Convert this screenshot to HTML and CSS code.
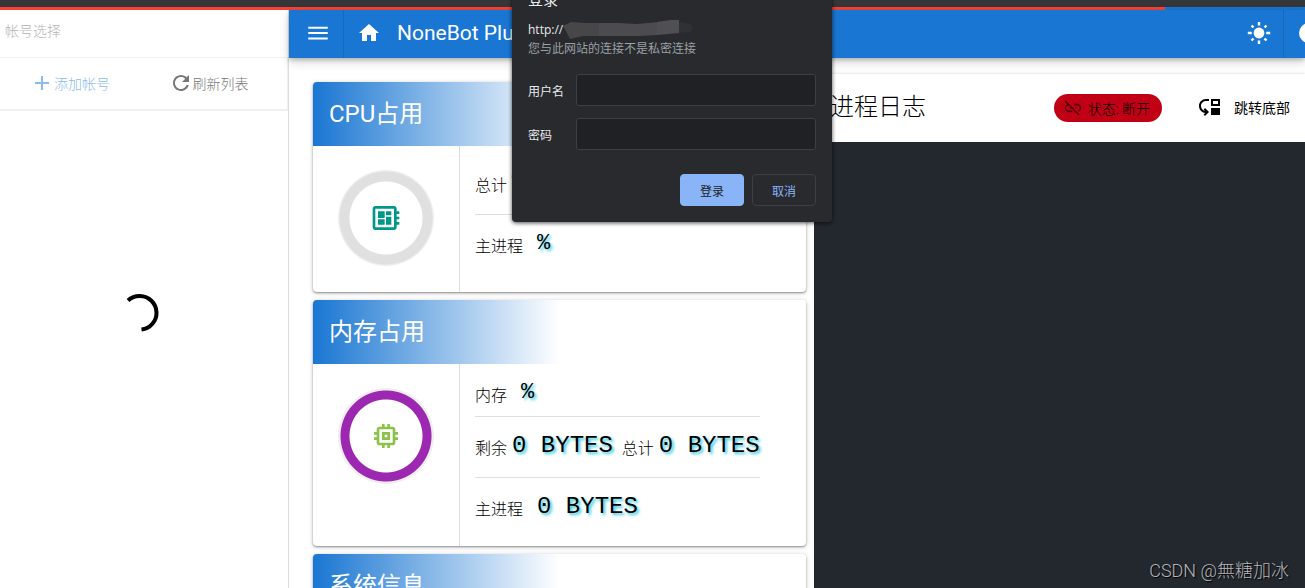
FILE: index.html
```html
<!DOCTYPE html>
<html lang="zh-CN">
<head>
<meta charset="utf-8">
<title>NoneBot</title>
<link rel="stylesheet" href="styles.css">
</head>
<body>
<div class="browser-edge"></div>
<div class="progress"></div>
<div class="app">
  <aside class="sidebar">
    <input class="account-input" type="text" placeholder="帐号选择" aria-label="帐号选择">
    <div class="account-actions">
      <button class="action action-add" type="button">
        <svg width="16" height="16" viewBox="0 0 16 16"><path d="M8 1v14M1 8h14" stroke="currentColor" stroke-width="2"/></svg>添加帐号
      </button>
      <button class="action" type="button">
        <svg width="24" height="24" viewBox="0 0 24 24" fill="currentColor"><path d="M17.65 6.35C16.2 4.9 14.21 4 12 4c-4.42 0-7.99 3.58-7.99 8s3.57 8 7.99 8c3.73 0 6.84-2.55 7.73-6h-2.08c-.82 2.33-3.04 4-5.65 4-3.31 0-6-2.69-6-6s2.69-6 6-6c1.66 0 3.14.69 4.22 1.78L13 11h7V4l-2.35 2.35z"/></svg>刷新列表
      </button>
    </div>
    <div class="loading">
      <svg width="50" height="50" viewBox="0 0 50 50" fill="none"><path d="M9 12.500A17 17 0 0 1 21 8A16.800 16.800 0 0 1 22.500 41.500" stroke="#000" stroke-width="4"/></svg>
    </div>
  </aside>

  <div class="main">
    <header class="topbar">
      <button class="bar-button" type="button" aria-label="菜单">
        <svg width="26" height="26" viewBox="0 0 24 24" fill="currentColor"><path d="M3 18h18v-1.900H3zM3 13h18v-1.900H3zM3 6.200v1.900h18V6.200z"/></svg>
      </button>
      <a class="home" href="#" aria-label="主页">
        <svg width="24" height="24" viewBox="0 0 24 24" fill="currentColor"><path d="M10 20v-6h4v6h5v-8h3L12 3 2 12h3v8z"/></svg>
      </a>
      <h1 class="brand">NoneBot Plugin</h1>
      <button class="theme" type="button" aria-label="主题">
        <svg width="24" height="24" viewBox="0 0 24 24"><circle cx="12" cy="12" r="5.400" fill="currentColor"/><path d="M12 1v3.500M12 19.500v3.500M.8 12h4M19.200 12h4M4.500 4.500l2 2M17.500 17.500l2 2M4.500 19.500l2-2M17.500 6.500l2-2" stroke="currentColor" stroke-width="2.400"/></svg>
      </button>
      <div class="avatar-cell"><span class="avatar"></span></div>
    </header>

    <div class="content">
      <main class="cards">
        <section class="card">
          <h2 class="card-title">CPU占用</h2>
          <div class="card-body">
            <div class="gauge-cell">
              <div class="gauge gauge-cpu">
                <svg width="32" height="32" viewBox="0 0 24 24" fill="currentColor"><path d="M22 9V7h-2V5c0-1.100-.9-2-2-2H4c-1.100 0-2 .9-2 2v14c0 1.100.9 2 2 2h14c1.100 0 2-.9 2-2v-2h2v-2h-2v-2h2v-2h-2V9h2zm-4 10H4V5h14v14zM6 13h5v4H6zm6-6h4v3h-4zM6 7h5v5H6zm6 4h4v6h-4z"/></svg>
              </div>
            </div>
            <div class="stats stats-cpu">
              <div class="stat"><span>总计</span><span class="lcd lcd-small">%</span></div>
              <div class="stat spaced"><span>主进程</span><span class="lcd lcd-small">%</span></div>
            </div>
          </div>
        </section>

        <section class="card">
          <h2 class="card-title">内存占用</h2>
          <div class="card-body">
            <div class="gauge-cell">
              <div class="gauge gauge-memory">
                <svg width="32" height="32" viewBox="0 0 24 24" fill="currentColor"><path d="M15 9H9v6h6V9zm-2 4h-2v-2h2v2zm8-2V9h-2V7c0-1.100-.9-2-2-2h-2V3h-2v2h-2V3H9v2H7c-1.100 0-2 .9-2 2v2H3v2h2v2H3v2h2v2c0 1.100.9 2 2 2h2v2h2v-2h2v2h2v-2h2c1.100 0 2-.9 2-2v-2h2v-2h-2v-2h2zm-4 6H7V7h10v10z"/></svg>
              </div>
            </div>
            <div class="stats">
              <div class="stat stat-short spaced"><span>内存</span><span class="lcd lcd-small">%</span></div>
              <div class="stat"><span>剩余</span><span class="lcd">0 BYTES</span><span class="second">总计</span><span class="lcd">0 BYTES</span></div>
              <div class="stat spaced"><span>主进程</span><span class="lcd">0 BYTES</span></div>
            </div>
          </div>
        </section>

        <section class="card">
          <h2 class="card-title">系统信息</h2>
        </section>
      </main>

      <section class="log">
        <div class="log-head">
          <h2 class="log-title">进程日志</h2>
          <span class="status">
            <svg width="20" height="20" viewBox="0 0 24 24" fill="currentColor"><path d="M17 7h-4v1.900h4c1.710 0 3.100 1.390 3.100 3.100 0 1.430-.98 2.630-2.310 2.980l1.460 1.460C20.880 15.610 22 13.950 22 12c0-2.760-2.240-5-5-5zm-1 4h-2.190l2 2H16zM2 4.270l3.110 3.110C3.290 8.120 2 9.910 2 12c0 2.760 2.240 5 5 5h4v-1.900H7c-1.710 0-3.100-1.390-3.100-3.100 0-1.590 1.210-2.900 2.760-3.070L8.730 11H8v2h2.730L13 15.270V17h1.730l4.010 4L20 19.740 3.270 3z"/></svg>
            状态: 断开
          </span>
          <button class="jump" type="button">
            <svg width="24" height="24" viewBox="0 0 24 24" fill="currentColor"><path d="M3 11c0 2.450 1.760 4.470 4.080 4.910l-1.490-1.490L7 13l4 4.010L7 21l-1.410-1.410 1.580-1.580v-.06C3.700 17.540 1 14.580 1 11c0-3.870 3.130-7 7-7h3v2H8c-2.760 0-5 2.240-5 5zM22 11V4h-9v7h9zm-2-2h-5V6h5v3zM13 13h9v7h-9z"/></svg>
            跳转底部
          </button>
        </div>
        <div class="log-body"><span class="watermark">CSDN @無糖加冰</span></div>
      </section>
    </div>
  </div>
</div>

<form class="dialog">
  <h2 class="dialog-title">登录</h2>
  <div class="origin">http://
    <svg width="130" height="20" viewBox="0 0 130 20"><path d="M0 7l8-4 14 1 16 0v13l-18 0-13 3-3-6z" fill="#474749"/><path d="M36 4l20 0 18 1 22-2v13l-20 1-40 0z" fill="#4c4c50"/><path d="M94 3l14-2 8 0v13l-22 2z" fill="#505054"/><path d="M116 3l12 2 2 4-3 4-11 1z" fill="#303134"/></svg>
  </div>
  <p class="notice">您与此网站的连接不是私密连接</p>
  <div class="field"><label for="user">用户名</label><input id="user" type="text"></div>
  <div class="field"><label for="pass">密码</label><input id="pass" type="password"></div>
  <div class="dialog-actions">
    <button class="dialog-button primary" type="button">登录</button>
    <button class="dialog-button" type="button">取消</button>
  </div>
</form>
</body>
</html>
```

FILE: styles.css
```css
* {
  box-sizing: border-box;
}

body {
  margin: 0;
  height: 100vh;
  overflow: hidden;
  display: flex;
  flex-direction: column;
  background: #fff;
  color: #000;
  font-family: Roboto, "Noto Sans CJK SC", sans-serif;
  font-size: 14px;
}

h1, h2, p {
  margin: 0;
  font-weight: 400;
}

button, input {
  font: inherit;
  color: inherit;
  border: 0;
  background: none;
  padding: 0;
  margin: 0;
}

svg {
  display: block;
  flex: none;
}

.browser-edge {
  flex: none;
  height: 7px;
  background: #35363a;
}

.progress {
  flex: none;
  height: 3px;
  background: linear-gradient(90deg, #f44336 1165px, #1976d2 1165px);
}

.app {
  flex: 1;
  min-height: 0;
  display: flex;
}

.sidebar {
  flex: none;
  width: 289px;
  border-right: 1px solid #ddd;
  font-weight: 300;
}

.account-input {
  display: block;
  width: 100%;
  height: 48px;
  padding: 0 5px 6px;
  border-bottom: 1px solid #f0f0f0;
}

.account-input::placeholder {
  color: #b4b4b4;
}

.account-actions {
  display: grid;
  grid-template-columns: 144px 1fr;
  height: 53px;
  padding: 0 14px 2px 0;
  border-bottom: 2px solid #f0f0f0;
  border-right: 1px solid #f0f0f0;
}

.action {
  display: flex;
  align-items: center;
  justify-content: center;
  color: #777;
}

.action-add {
  gap: 4px;
  color: #8dbbeb;
}

.loading {
  display: flex;
  justify-content: center;
  padding-top: 177px;
}

.main {
  flex: 1;
  min-width: 0;
  display: flex;
  flex-direction: column;
}

.topbar {
  flex: none;
  height: 48px;
  display: flex;
  align-items: center;
  background: #1976d2;
  color: #fff;
  box-shadow: 0 2px 4px rgba(0, 0, 0, .2), 0 4px 10px rgba(0, 0, 0, .16);
  z-index: 1;
}

.bar-button {
  width: 55px;
  height: 48px;
  padding: 0 16px 2px;
  border-right: 1px solid #1669bb;
}

.home {
  color: inherit;
  padding: 0 16px 2px 13px;
}

.brand {
  flex: 1;
  font-size: 21px;
  line-height: 46px;
  padding-bottom: 2px;
}

.theme {
  padding: 0 12px 2px;
}

.avatar-cell {
  width: 22px;
  height: 48px;
  display: flex;
  align-items: center;
  padding: 0 0 2px 15px;
  border-left: 1px solid #1669bb;
  overflow: hidden;
}

.avatar {
  flex: none;
  width: 20px;
  height: 20px;
  border-radius: 50%;
  background: #fff;
}

.content {
  flex: 1;
  min-height: 0;
  display: grid;
  grid-template-columns: 1fr 1fr;
  grid-template-rows: minmax(0, 1fr);
  overflow: hidden;
}

.cards {
  display: flex;
  flex-direction: column;
  gap: 8px;
  min-width: 0;
  padding: 24px 0 0 24px;
  margin-right: -9px;
}

.card {
  flex: none;
  border-radius: 4px;
  overflow: hidden;
  background: #fff;
  box-shadow: 0 1px 5px rgba(0, 0, 0, .2), 0 1px 2px rgba(0, 0, 0, .35);
}

.card-title {
  height: 64px;
  padding: 0 16px;
  color: #fff;
  font-size: 24px;
  line-height: 64px;
  background: linear-gradient(90deg, #1976d2, #fff 50%);
}

.card-body {
  display: flex;
  min-height: 146px;
}

.gauge-cell {
  width: 147px;
  padding-top: 24px;
  border-right: 1px solid #ddd;
}

.gauge {
  width: 96px;
  height: 96px;
  margin: 0 auto;
  display: flex;
  align-items: center;
  justify-content: center;
  border-radius: 50%;
}

.gauge-cpu {
  color: #009688;
  background: radial-gradient(circle, #fff 36px, #e0e0e0 37px, #e0e0e0 46px, #eee 47px, #eee 48px);
}

.gauge-memory {
  color: #8bc34a;
  background: radial-gradient(circle, #fff 36px, #9c27b0 37px, #9c27b0 45px, #eee 46px, #eee 48px);
}

.stats {
  padding: 8px 15px;
  font-size: 16px;
  font-weight: 300;
}

.stats-cpu {
  width: 317px;
}

.stat {
  height: 61px;
  display: flex;
  align-items: center;
  gap: 5px;
  border-bottom: 1px solid #ddd;
}

.stat:last-child {
  height: 60px;
  border-bottom: 0;
}

.stat-short {
  height: 45px;
}

.spaced {
  gap: 14px;
}

.second {
  margin-left: 4px;
}

.lcd {
  font-family: "Liberation Mono", monospace;
  font-size: 24px;
  font-weight: 400;
  line-height: 28px;
  padding-bottom: 2px;
  text-shadow: 2px 2px 3px #26c6da;
}

.lcd-small {
  font-size: 22px;
}

.log {
  min-width: 0;
  display: flex;
  flex-direction: column;
  margin-left: 17px;
  padding-top: 16px;
}

.log-head {
  flex: none;
  height: 68px;
  display: flex;
  align-items: center;
  padding: 0 15px 0 16px;
  box-shadow: 0 0 3px rgba(0, 0, 0, .2);
}

.log-title {
  flex: 1;
  padding-bottom: 8px;
  font-size: 24px;
  font-weight: 300;
}

.status {
  display: flex;
  align-items: center;
  gap: 5px;
  height: 28px;
  padding: 0 12px 0 9px;
  margin-right: 36px;
  border-radius: 14px;
  background: #c10015;
  color: #000;
  font-weight: 300;
}

.status svg {
  opacity: .55;
}

.jump {
  display: flex;
  align-items: center;
  gap: 12px;
  padding-bottom: 2px;
}

.log-body {
  flex: 1;
  display: flex;
  align-items: flex-end;
  justify-content: flex-end;
  padding: 0 16px 6px;
  background: #23272e;
}

.watermark {
  color: #b4b6b9;
  font-size: 18px;
  font-weight: 300;
  text-shadow: 1px 1px 1px #000;
}

/* Sign-in prompt floating above the page */
.dialog {
  position: absolute;
  z-index: 2;
  top: -12px;
  left: 512px;
  width: 320px;
  padding: 0 16px 16px;
  border-radius: 4px;
  background: #292a2d;
  color: #e8eaed;
  font-size: 12px;
  box-shadow: 0 1px 4px rgba(0, 0, 0, .7);
}

.dialog-title {
  font-size: 15px;
  line-height: 24px;
}

.origin {
  display: flex;
  align-items: center;
  height: 28px;
  padding-top: 6px;
  font-family: "Open Sans", sans-serif;
}

.notice {
  color: #9aa0a6;
  line-height: 16px;
  padding-top: 1px;
  margin-bottom: 17px;
}

.field {
  display: flex;
  align-items: center;
  margin-bottom: 12px;
}

.field label {
  width: 48px;
}

.field input {
  flex: 1;
  min-width: 0;
  height: 32px;
  padding: 0 8px;
  border: 1px solid #3c4043;
  border-radius: 3px;
  background: #202124;
}

.dialog-actions {
  display: flex;
  justify-content: flex-end;
  gap: 8px;
  padding-top: 12px;
}

.dialog-button {
  width: 64px;
  height: 32px;
  border: 1px solid #3c4043;
  border-radius: 4px;
  color: #8ab4f8;
}

.primary {
  border-color: #8ab4f8;
  background: #8ab4f8;
  color: #202124;
}
```
